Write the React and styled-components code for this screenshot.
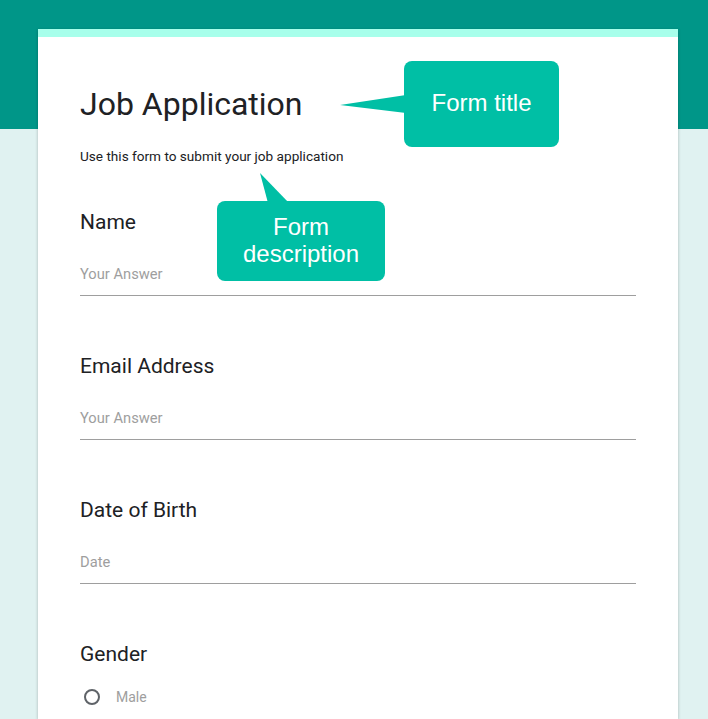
import React from "react";
import styled, { createGlobalStyle } from "styled-components";

const GlobalStyle = createGlobalStyle`
  html, body {
    margin: 0;
    padding: 0;
    overflow: hidden;
  }
  body {
    background: #e0f2f1;
    font-family: Roboto, "Noto Sans", Arial, sans-serif;
    color: #202124;
  }
`;

const Page = styled.div`
  position: relative;
  min-height: 719px;
  padding: 29px 30px 0 38px;
  background: linear-gradient(#009688 0, #009688 129px, #e0f2f1 129px);
`;

const Card = styled.div`
  width: 640px;
  min-height: 690px;
  box-sizing: border-box;
  background: #fff;
  border-top: 8px solid #a7ffeb;
  padding: 47px 42px 0;
  box-shadow: 0 1px 3px rgba(0, 0, 0, 0.25);
`;

const Title = styled.h1`
  margin: 0;
  font-size: 32px;
  font-weight: 400;
  line-height: 40px;
  color: #202124;
`;

const Description = styled.p`
  margin: 23px 0 0;
  font-size: 13.6px;
  line-height: 18px;
  color: #202124;
`;

const Field = styled.div`
  margin-top: ${(p) => p.gap || 57}px;
`;

const Label = styled.div`
  font-size: 21px;
  line-height: 26px;
  color: #202124;
`;

const Answer = styled.div`
  margin-top: 30px;
  padding-bottom: 12px;
  font-size: 14.7px;
  line-height: 18px;
  color: #9e9e9e;
  border-bottom: 1px solid #9e9e9e;
`;

const Option = styled.label`
  display: flex;
  align-items: center;
  gap: 16px;
  margin-top: 20px;
  font-size: 14px;
  line-height: 20px;
  color: #9e9e9e;
`;

const Radio = styled.span`
  width: 12px;
  height: 12px;
  margin-left: 4px;
  border: 2px solid #5f6368;
  border-radius: 50%;
`;

const Callout = styled.div`
  position: absolute;
  left: ${(p) => p.x}px;
  top: ${(p) => p.y}px;
  width: ${(p) => p.w}px;
  height: ${(p) => p.h}px;
  box-sizing: border-box;
  padding-bottom: ${(p) => p.lift || 0}px;
  display: flex;
  align-items: center;
  justify-content: center;
  text-align: center;
  background: #00bfa5;
  border-radius: 8px;
  color: #fff;
  font-family: "Liberation Sans", Arial, sans-serif;
  font-size: 24px;
  line-height: 27px;
`;

const Tail = styled.svg`
  position: absolute;
  left: 0;
  top: 0;
  overflow: visible;
  pointer-events: none;
`;

const fields = [
  { label: "Name", answer: "Your Answer", gap: 44 },
  { label: "Email Address", answer: "Your Answer" },
  { label: "Date of Birth", answer: "Date" },
];

export default function App() {
  return (
    <>
      <GlobalStyle />
      <Page>
        <Card>
          <Title>Job Application</Title>
          <Description>Use this form to submit your job application</Description>
          {fields.map((f) => (
            <Field key={f.label} gap={f.gap}>
              <Label>{f.label}</Label>
              <Answer>{f.answer}</Answer>
            </Field>
          ))}
          <Field>
            <Label>Gender</Label>
            <Option>
              <Radio />
              Male
            </Option>
          </Field>
        </Card>

        <Tail width="708" height="719">
          <polygon points="340,105 406,95 406,113" fill="#00bfa5" />
          <polygon points="260,173 268,203 289,203" fill="#00bfa5" />
        </Tail>
        <Callout x={404} y={61} w={155} h={86} lift={4}>
          Form title
        </Callout>
        <Callout x={217} y={201} w={168} h={80} lift={2}>
          Form
          <br />
          description
        </Callout>
      </Page>
    </>
  );
}
